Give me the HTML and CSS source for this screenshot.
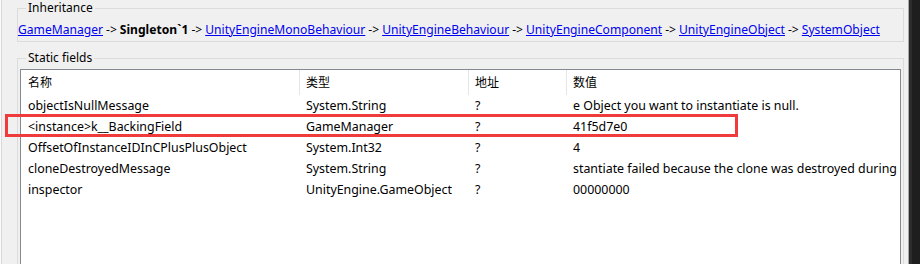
FILE: index.html
```html
<!DOCTYPE html>
<html lang="zh">
<head>
  <meta charset="UTF-8">
  <title>Inspector</title>
  <link rel="stylesheet" href="styles.css">
</head>
<body>
  <div class="window">
    <div class="panel">
      <fieldset class="group">
        <legend>Inheritance</legend>
        <div class="chain">
          <a href="#">GameManager</a><span class="arrow">-&gt;</span><b>Singleton`1</b><span class="arrow">-&gt;</span><a href="#">UnityEngineMonoBehaviour</a><span class="arrow">-&gt;</span><a href="#">UnityEngineBehaviour</a><span class="arrow">-&gt;</span><a href="#">UnityEngineComponent</a><span class="arrow">-&gt;</span><a href="#">UnityEngineObject</a><span class="arrow">-&gt;</span><a href="#">SystemObject</a>
        </div>
      </fieldset>

      <fieldset class="group group-fields">
        <legend>Static fields</legend>
        <div class="listview">
          <div class="row head">
            <div class="cell">名称</div>
            <div class="cell">类型</div>
            <div class="cell">地址</div>
            <div class="cell">数值</div>
          </div>
          <div class="row">
            <div class="cell">objectIsNullMessage</div>
            <div class="cell">System.String</div>
            <div class="cell">?</div>
            <div class="cell">e Object you want to instantiate is null.</div>
          </div>
          <div class="row">
            <div class="cell">&lt;instance&gt;k__BackingField</div>
            <div class="cell">GameManager</div>
            <div class="cell">?</div>
            <div class="cell">41f5d7e0</div>
          </div>
          <div class="row">
            <div class="cell">OffsetOfInstanceIDInCPlusPlusObject</div>
            <div class="cell">System.Int32</div>
            <div class="cell">?</div>
            <div class="cell">4</div>
          </div>
          <div class="row">
            <div class="cell">cloneDestroyedMessage</div>
            <div class="cell">System.String</div>
            <div class="cell">?</div>
            <div class="cell">stantiate failed because the clone was destroyed during</div>
          </div>
          <div class="row">
            <div class="cell">inspector</div>
            <div class="cell">UnityEngine.GameObject</div>
            <div class="cell">?</div>
            <div class="cell">00000000</div>
          </div>
        </div>
      </fieldset>
    </div>
    <div class="dark"></div>
  </div>
  <div class="mark"></div>
</body>
</html>
```

FILE: styles.css
```css
*{margin:0;padding:0;box-sizing:border-box;}
html,body{height:100%;overflow:hidden;}
body{background:#f0f0f0;font-family:"Noto Sans","Noto Sans CJK SC",sans-serif;font-size:12px;color:#000;position:relative;}

.window{display:flex;height:100%;}
.panel{flex:1;min-width:0;border-left:1px solid #fafafa;box-shadow:inset 1px 0 0 #d9d9d9;padding:0 4px 0 16px;border-right:1px solid #a7a7a7;}
.dark{width:11px;background:#1e1e1e;border-left:3px solid #2c2c2c;}

.group{border:1px solid #dcdcdc;padding:0 2px;min-width:0;}
.group legend{margin-left:6px;padding:0 2px;line-height:16px;}
.chain{height:25px;padding-top:5px;line-height:18px;margin-left:-2px;white-space:nowrap;font-size:12.1px;}
.chain a{color:#0000f0;text-decoration:underline;}
.chain b{font-weight:bold;}
.arrow{padding:0 3px;}

.group-fields{margin-top:8px;border-bottom:none;}
.listview{margin-top:3px;background:#fff;border:1px solid #848890;border-bottom:none;height:196px;overflow:hidden;}

.row{display:grid;grid-template-columns:278px 169px 98px 1fr;height:21px;line-height:21px;font-size:12.4px;}
.row.head{height:25px;line-height:24px;}
.cell{padding-left:7px;white-space:nowrap;overflow:hidden;}
.head .cell{font-family:"Noto Sans CJK SC",sans-serif;font-size:12px;}
.head .cell + .cell{border-left:1px solid #e5e5e5;padding-left:6px;}

.mark{position:absolute;left:5px;top:114px;width:733px;height:23px;border:3px solid #ef3b3b;}
```
